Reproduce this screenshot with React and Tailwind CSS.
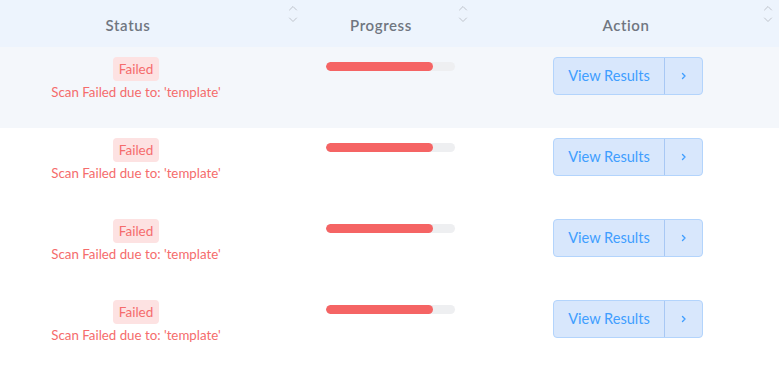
import React from "react";

const rows = [1, 2, 3, 4];

function SortIcon() {
  return (
    <svg width="10" height="22" viewBox="0 0 10 22" fill="none" stroke="#c0c4cc" strokeWidth="1" strokeLinecap="round" strokeLinejoin="round">
      <path d="M1.5 7 L5 3.5 L8.5 7" />
      <path d="M1.5 15 L5 18.5 L8.5 15" />
    </svg>
  );
}

function Row({ hover }) {
  return (
    <div className={`flex h-[81px] ${hover ? "bg-[#f4f7fb]" : "bg-white"}`}>
      {/* Status */}
      <div className="w-[272px] flex flex-col items-center pt-[10px]">
        <span className="h-6 px-[6px] rounded bg-[#fde2e2] text-[#f56c6c] text-[13.5px] leading-6">Failed</span>
        <span className="text-[#f56c6c] text-[13.3px] leading-[20px] mt-[1px]">Scan Failed due to: 'template'</span>
      </div>

      {/* Progress */}
      <div className="w-[236px] flex justify-center pt-[15px]">
        <div className="w-[129px] h-[9px] rounded-full bg-[#eeeff1] overflow-hidden">
          <div className="h-full w-[83%] rounded-full bg-[#f56464]" />
        </div>
      </div>

      {/* Action */}
      <div className="w-[240px] flex justify-center pt-[10px]">
        <div className="flex h-[38px] rounded border border-[#b3d4fc] bg-[#d8e7fc] text-[#409eff] text-[14.6px]">
          <button className="w-[111px] border-r border-[#a8c8f4]">View Results</button>
          <button className="w-[37px] flex items-center justify-center">
            <svg width="8" height="8" viewBox="0 0 8 8" fill="none" stroke="#409eff" strokeWidth="1.4" strokeLinecap="round" strokeLinejoin="round">
              <path d="M2.5 1.5 L5 4 L2.5 6.5" />
            </svg>
          </button>
        </div>
      </div>
    </div>
  );
}

export default function App() {
  return (
    <div className="w-[779px] h-[374px] bg-white overflow-hidden" style={{ fontFamily: "Lato, 'Noto Sans', sans-serif" }}>
      {/* Header */}
      <div className="relative flex h-[47px] pt-[3px] bg-[#edf4fd] text-[#707680] text-[15px] font-semibold tracking-[0.6px]">
        <div className="w-[256px] flex items-center justify-center">Status</div>
        <div className="w-[250px] flex items-center justify-center">Progress</div>
        <div className="w-[240px] flex items-center justify-center">Action</div>
        <div className="absolute left-[288px] top-[3px]"><SortIcon /></div>
        <div className="absolute left-[458px] top-[3px]"><SortIcon /></div>
        <div className="absolute left-[763px] top-[3px]"><SortIcon /></div>
      </div>
      {rows.map((r) => (
        <Row key={r} hover={r === 1} />
      ))}
    </div>
  );
}
